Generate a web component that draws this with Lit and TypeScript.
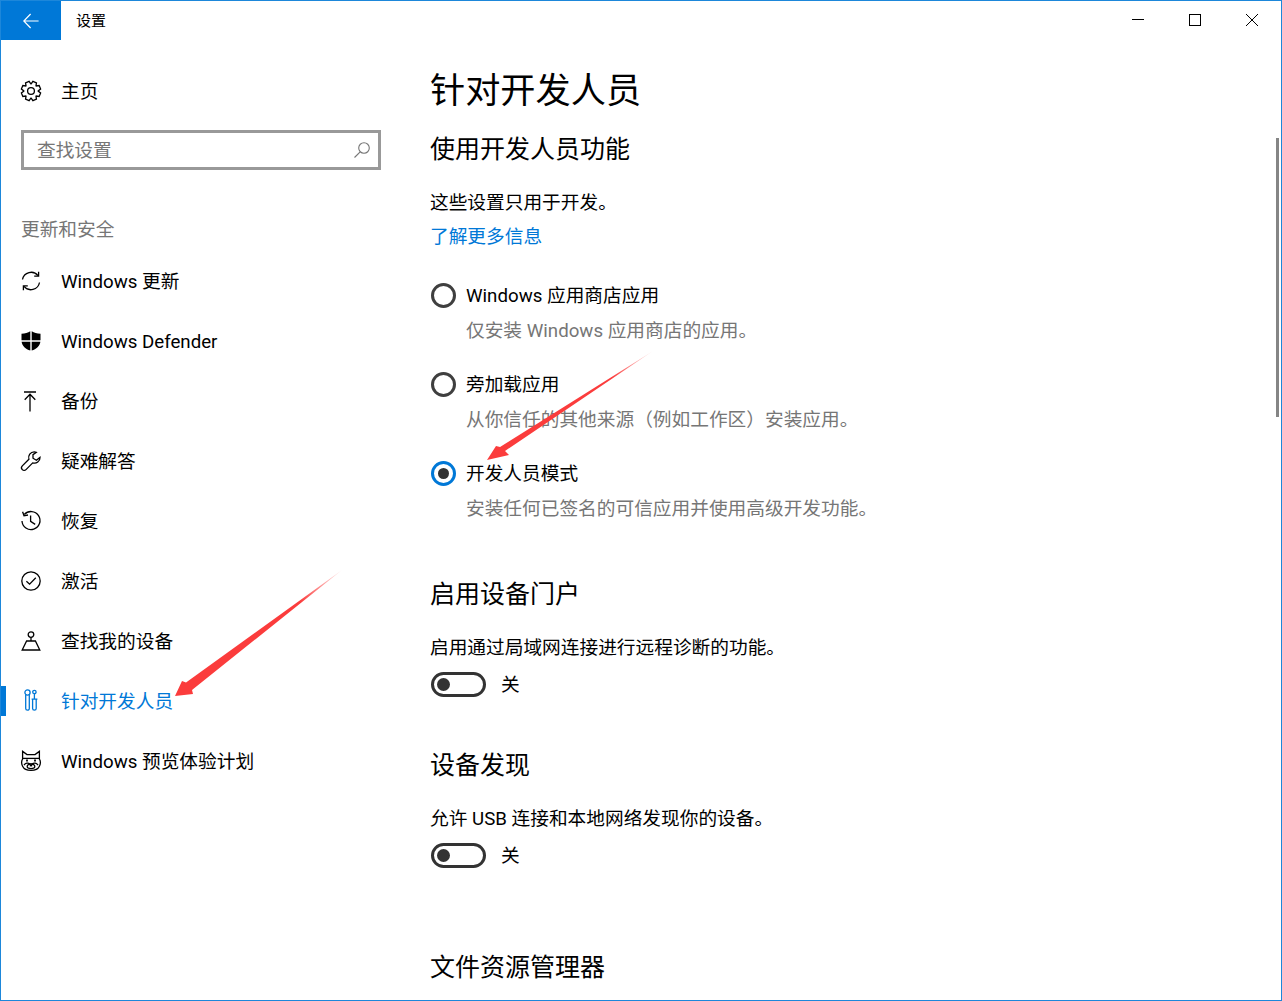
import { LitElement, html, css, svg } from "lit";
import { customElement } from "lit/decorators.js";

function gearPath(cx: number, cy: number, ro: number, ri: number, n: number): string {
  const pts: string[] = [];
  for (let i = 0; i < n; i++) {
    const a = (i / n) * Math.PI * 2 + Math.PI / n;
    const w = Math.PI / n;
    const p = [
      [ri, a - w * 0.95],
      [ro, a - w * 0.5],
      [ro, a + w * 0.5],
      [ri, a + w * 0.95],
    ];
    for (const [r, t] of p) pts.push(`${(cx + r * Math.cos(t)).toFixed(2)} ${(cy + r * Math.sin(t)).toFixed(2)}`);
  }
  return "M" + pts.join("L") + "Z";
}

const ic = (body: unknown) => html`<svg class="ic" viewBox="0 0 20 20" width="20" height="20" fill="none" stroke="currentColor" stroke-width="1.3">${body}</svg>`;

const icons: Record<string, unknown> = {
  gear: ic(svg`<path d="${gearPath(10, 10, 9.8, 7.2, 8)}"/><circle cx="10" cy="10" r="3.4"/>`),
  sync: ic(svg`<path d="M1.5 8.5A8.8 8.8 0 0 1 17 4.6"/><path d="M18.5 11.5A8.8 8.8 0 0 1 3 15.4"/><path d="M17.6 .8V5.2H13.2"/><path d="M2.4 19.2V14.8H6.8"/>`),
  shield: ic(svg`<path stroke="none" fill="currentColor" d="M9.3 .2C7 1.8 4 2.6 .5 2.8V9.3H9.3ZM10.7 .2C13 1.8 16 2.6 19.5 2.8V9.3H10.7ZM.6 10.7C1.2 14.8 4.6 18 9.3 19.6V10.7ZM19.4 10.7C18.8 14.8 15.4 18 10.7 19.6V10.7Z"/>`),
  backup: ic(svg`<path d="M3 1H15M9 3V20.5M3.7 8.7L9 3.2L14.3 8.7"/>`),
  wrench: ic(svg`<path d="M13.3 .9A5.6 5.6 0 0 0 7.9 8.2L1.3 14.9A2.6 2.6 0 0 0 5 18.6L11.7 11.9A5.6 5.6 0 0 0 19 6.4L15.4 9.2L12 7.2V3.7L15.3 1.3A5.6 5.6 0 0 0 13.3 .9Z"/>`),
  history: ic(svg`<path d="M3.3 3.5A9 9 0 1 1 1 10"/><path d="M1.6 .8L3 4.8L7 4"/><path d="M9.6 4.6V10.4L14.2 13.4"/>`),
  check: ic(svg`<circle cx="10" cy="10" r="9.2"/><path d="M5.4 10.2L8.6 13.2L14.8 6.8"/>`),
  find: ic(svg`<circle cx="10" cy="3.6" r="2.8"/><path d="M10 6.4V10"/><path d="M1.2 19H18.8L14.4 10H5.6Z"/>`),
  dev: ic(svg`<circle cx="6.5" cy="1.5" r="2.6"/><path d="M4.7 3.4V17.4A1.8 1.8 0 0 0 8.3 17.4V3.4"/><circle cx="13.4" cy="1" r="1.7"/><path d="M13.4 2.7V8M10.6 8.2H16.4M11.6 8.2V17.4A1.8 1.8 0 0 0 15.2 17.4V8.2"/>`),
  cat: ic(svg`<path d="M1.6 .4V8C.5 9.8.5 13 1.6 15.2C3 18.2 6 19.4 10 19.4S17 18.2 18.4 15.2C19.5 13 19.5 9.8 18.4 8V.4L14 3.6H6Z"/><path d="M1.6 7.4H18.4"/><path stroke-width="1.8" d="M6 8.6V10.6M14 8.6V10.6"/><path d="M3 14.2C4.5 11.8 7.2 11.6 8.6 12.8H11.4C12.8 11.6 15.5 11.8 17 14.2"/><path d="M6.2 15.6C6.2 13.6 8.4 13.2 10 13.2S13.8 13.6 13.8 15.6C13.8 18.4 6.2 18.4 6.2 15.6Z"/><path stroke-width="1.6" d="M8.8 14.6H11.2"/>`),
};

const navItems: [string, string, boolean?][] = [
  ["sync", "Windows 更新"],
  ["shield", "Windows Defender"],
  ["backup", "备份"],
  ["wrench", "疑难解答"],
  ["history", "恢复"],
  ["check", "激活"],
  ["find", "查找我的设备"],
  ["dev", "针对开发人员", true],
  ["cat", "Windows 预览体验计划"],
];

@customElement("app-root")
export class AppRoot extends LitElement {
  static styles = css`
    :host {
      display: block;
      position: relative;
      width: 1282px;
      height: 1001px;
      box-sizing: border-box;
      border: 1px solid #1d87da;
      overflow: hidden;
      background: #fff;
      color: #000;
      font-family: Roboto, "Noto Sans CJK SC", sans-serif;
      font-size: 18.7px;
    }
    .titlebar { display: flex; height: 39px; align-items: stretch; }
    .back { width: 60px; background: #0078d7; display: flex; align-items: center; justify-content: center; color: #fff; }
    .apptitle { margin-left: 15px; font-size: 15px; line-height: 37px; padding-top: 2px; flex: 1; }
    .ctl { width: 57px; display: flex; align-items: center; justify-content: center; position: relative; left: -1px; top: -1px; }
    .main { display: flex; }
    .side { width: 429px; flex: none; padding-top: 21px; }
    .row { position: relative; display: flex; align-items: center; gap: 20px; height: 60px; padding-left: 20px; white-space: nowrap; }
    .txt { line-height: 32px; padding-top: 2px; }
    .ic { flex: none; display: block; overflow: visible; }
    .row.active { color: #0078d7; }
    .row.active::before { content: ""; position: absolute; left: 0; top: 15px; width: 5px; height: 30px; background: #0078d7; }
    .search {
      margin: 9px 0 0 20px; width: 360px; height: 40px; box-sizing: border-box;
      border: 3px solid #999; display: flex; align-items: center; justify-content: space-between;
      padding: 0 7px 0 13px; color: #767676;
    }
    .label { margin: 42px 0 5px 20px; line-height: 32px; padding-top: 2px; color: #767676; }
    .content { flex: 1; padding-top: 25px; }
    h1 { margin: 0; font-size: 35.2px; font-weight: 400; line-height: 48px; padding-top: 2px; }
    h2 { margin: 0; font-size: 25px; font-weight: 400; line-height: 38px; padding-top: 2px; white-space: nowrap; }
    h2.s1 { margin-top: 14px; }
    h2.s2 { margin-top: 51px; }
    h2.s3 { margin-top: 41px; }
    h2.s4 { margin-top: 72px; }
    p { margin: 16px 0 0; line-height: 32px; padding-top: 2px; }
    a { display: block; line-height: 32px; padding-top: 2px; color: #0078d7; text-decoration: none; }
    .radio { display: flex; align-items: center; gap: 10px; height: 40px; margin-top: 19px; }
    .radio.first { margin-top: 22px; }
    .dot { width: 25px; height: 25px; box-sizing: border-box; border: 3px solid #3f3f3f; border-radius: 50%; margin-left: 1px; display: flex; align-items: center; justify-content: center; }
    .dot.on { border-color: #0078d7; }
    .dot.on::after { content: ""; width: 11px; height: 11px; border-radius: 50%; background: #333; }
    .desc { line-height: 28px; padding-top: 2px; color: #767676; padding-left: 36px; }
    .toggle { display: flex; align-items: center; gap: 15px; height: 40px; }
    .track { width: 55px; height: 25px; box-sizing: border-box; border: 3px solid #333; border-radius: 13px; margin-left: 1px; display: flex; align-items: center; padding-left: 3px; }
    .track::after { content: ""; width: 13px; height: 13px; border-radius: 50%; background: #333; }
    .thumb { position: absolute; left: 1275px; top: 137px; width: 3px; height: 279px; background: #858585; }
    .arrows { position: absolute; left: -1px; top: -1px; pointer-events: none; }
  `;

  private radio(label: string, desc: string, on: boolean, first = false) {
    return html`
      <div class="radio ${first ? "first" : ""}"><span class="dot ${on ? "on" : ""}"></span><span class="txt">${label}</span></div>
      <div class="desc">${desc}</div>`;
  }

  private toggle() {
    return html`<div class="toggle"><span class="track"></span><span class="txt">关</span></div>`;
  }

  render() {
    return html`
      <div class="titlebar">
        <div class="back">
          <svg width="16" height="16" viewBox="0 0 16 16" fill="none" stroke="currentColor" stroke-width="1.2"><path d="M.6 8H15.6M7.6 1L.8 8L7.6 15"/></svg>
        </div>
        <div class="apptitle">设置</div>
        <div class="ctl"><svg width="12" height="12" viewBox="0 0 12 12" stroke="#000" stroke-width="1"><path d="M0 5.5H12"/></svg></div>
        <div class="ctl"><svg width="12" height="12" viewBox="0 0 12 12" fill="none" stroke="#000" stroke-width="1"><rect x=".5" y=".5" width="11" height="11"/></svg></div>
        <div class="ctl"><svg width="12" height="12" viewBox="0 0 12 12" fill="none" stroke="#000" stroke-width="1"><path d="M0 0L12 12M12 0L0 12"/></svg></div>
      </div>
      <div class="main">
        <nav class="side">
          <div class="row">${icons.gear}<span class="txt">主页</span></div>
          <div class="search">
            <span class="txt">查找设置</span>
            <svg width="18" height="18" viewBox="0 0 18 18" fill="none" stroke="#767676" stroke-width="1.1"><circle cx="11" cy="7" r="5.3"/><path d="M7.2 10.8L1.5 16.5"/></svg>
          </div>
          <div class="label">更新和安全</div>
          ${navItems.map(([i, t, a]) => html`<div class="row ${a ? "active" : ""}">${icons[i]}<span class="txt">${t}</span></div>`)}
        </nav>
        <section class="content">
          <h1>针对开发人员</h1>
          <h2 class="s1">使用开发人员功能</h2>
          <p>这些设置只用于开发。</p>
          <a>了解更多信息</a>
          ${this.radio("Windows 应用商店应用", "仅安装 Windows 应用商店的应用。", false, true)}
          ${this.radio("旁加载应用", "从你信任的其他来源（例如工作区）安装应用。", false)}
          ${this.radio("开发人员模式", "安装任何已签名的可信应用并使用高级开发功能。", true)}
          <h2 class="s2">启用设备门户</h2>
          <p>启用通过局域网连接进行远程诊断的功能。</p>
          ${this.toggle()}
          <h2 class="s3">设备发现</h2>
          <p>允许 USB 连接和本地网络发现你的设备。</p>
          ${this.toggle()}
          <h2 class="s4">文件资源管理器</h2>
        </section>
      </div>
      <div class="thumb"></div>
      <svg class="arrows" width="1282" height="1001" viewBox="0 0 1282 1001">
        <defs>
          <linearGradient id="a1" gradientUnits="userSpaceOnUse" x1="342" y1="570" x2="300" y2="602">
            <stop offset="0" stop-color="#fb3c3c" stop-opacity=".1"/><stop offset="1" stop-color="#fb3c3c"/>
          </linearGradient>
          <linearGradient id="a2" gradientUnits="userSpaceOnUse" x1="653" y1="351" x2="612" y2="378">
            <stop offset="0" stop-color="#fb3c3c" stop-opacity=".1"/><stop offset="1" stop-color="#fb3c3c"/>
          </linearGradient>
        </defs>
        <polygon fill="url(#a1)" points="342,570 192,690 193,694 175,696 182,681 186,682.5"/>
        <polygon fill="url(#a2)" points="653,351 505,451 509,455 487,460 496,446 500,447"/>
      </svg>
    `;
  }
}
